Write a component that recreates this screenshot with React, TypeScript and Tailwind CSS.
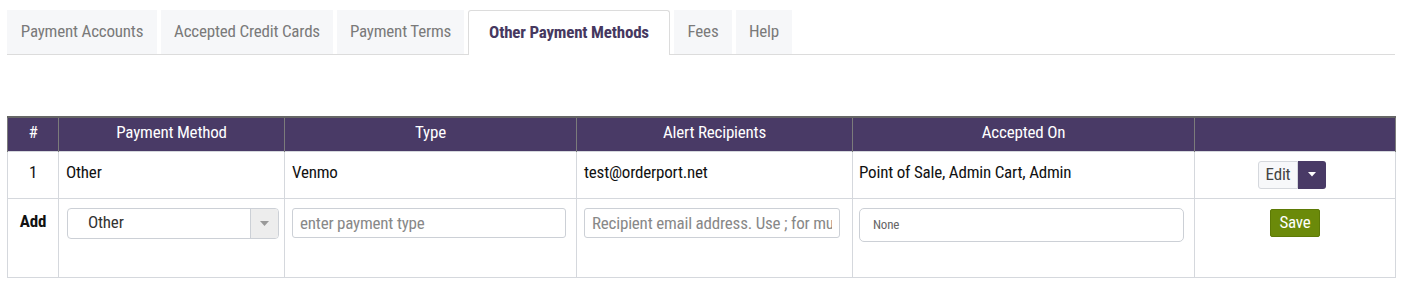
import React from 'react'

const tabs = [
  { label: 'Payment Accounts', w: 'w-[150px]' },
  { label: 'Accepted Credit Cards', w: 'w-[172px]' },
  { label: 'Payment Terms', w: 'w-[127px]' },
  { label: 'Other Payment Methods', w: 'w-[202px]', active: true },
  { label: 'Fees', w: 'w-[58px]' },
  { label: 'Help', w: 'w-[56px]' }
]

const Tabs = () => (
  <div className="flex h-[45px] gap-[4px] border-b border-[#dcdcdc]">
    {tabs.map((t) =>
      t.active ? (
        <div
          key={t.label}
          className={`${t.w} -mb-px flex items-center justify-center rounded-t-[3px] border border-b-0 border-[#dcdcdc] bg-white text-[17px] font-bold text-[#46385f]`}
        >
          {t.label}
        </div>
      ) : (
        <div
          key={t.label}
          className={`${t.w} flex items-center justify-center bg-[#f6f7f9] text-[17px] text-[#7a7a7a]`}
        >
          {t.label}
        </div>
      )
    )}
  </div>
)

const headers = ['#', 'Payment Method', 'Type', 'Alert Recipients', 'Accepted On', '']

const cell = 'border border-[#d5d8dd]'
const inputCls =
  'h-[30px] rounded-[3px] border border-[#ccd0d6] bg-white px-[7px] text-[17px] tracking-[-0.2px] text-[#333] outline-none placeholder:text-[#888]'

export default function App() {
  return (
    <div className="px-[7px] pt-[10px] font-['Roboto_Condensed',sans-serif] text-[17px] tracking-[-0.2px]">
      <Tabs />
      <table className="mt-[61px] w-[1388px] table-fixed border-collapse border border-[#d5d8dd]">
        <colgroup>
          <col className="w-[51px]" />
          <col className="w-[226px]" />
          <col className="w-[292px]" />
          <col className="w-[276px]" />
          <col className="w-[342px]" />
          <col className="w-[201px]" />
        </colgroup>
        <thead>
          <tr className="h-[34px] bg-[#493a66] text-white">
            {headers.map((h, i) => (
              <th
                key={i}
                className="border-x border-t-2 border-x-[#7b7b7b] border-t-[#666] pb-[3px] text-center text-[17px] font-normal"
              >
                {h}
              </th>
            ))}
          </tr>
        </thead>
        <tbody className="text-[#111]">
          <tr className="h-[47px]">
            <td className={`${cell} pb-[3px] text-center`}>1</td>
            <td className={`${cell} px-[7px] pb-[3px]`}>Other</td>
            <td className={`${cell} px-[7px] pb-[3px]`}>Venmo</td>
            <td className={`${cell} px-[7px] pb-[3px]`}>test@orderport.net</td>
            <td className={`${cell} px-[6px] pb-[3px]`}>Point of Sale, Admin Cart, Admin</td>
            <td className={`${cell} pr-[6px] text-center`}>
              <div className="inline-flex">
                <button className="flex h-[28px] items-center rounded-l-[3px] border border-[#d5d8dd] bg-[#f7f8fa] px-[7px] text-[17px] text-[#444]">
                  Edit
                </button>
                <button className="flex h-[28px] w-[28px] items-center justify-center rounded-r-[3px] bg-[#493a66]">
                  <svg width="8" height="5" viewBox="0 0 8 5">
                    <path d="M0 0h8L4 4.5z" fill="#fff" />
                  </svg>
                </button>
              </div>
            </td>
          </tr>
          <tr className="h-[79px] align-top">
            <td className={`${cell} pt-[10px] text-center font-bold`}>Add</td>
            <td className={`${cell} px-[8px] pt-[9px]`}>
              <div className="flex h-[31px] w-[212px] items-center overflow-hidden rounded-[4px] border border-[#ccd0d6]">
                <span className="flex-1 pl-[20px] text-[#333]">Other</span>
                <span className="flex h-full w-[28px] items-center justify-center border-l border-[#ccd0d6] bg-[#ededed]">
                  <svg width="9" height="5" viewBox="0 0 9 5">
                    <path d="M0 0h9L4.5 5z" fill="#999" />
                  </svg>
                </span>
              </div>
            </td>
            <td className={`${cell} px-[7px] pt-[9px]`}>
              <input className={`${inputCls} w-[274px]`} placeholder="enter payment type" />
            </td>
            <td className={`${cell} px-[7px] pt-[9px]`}>
              <input
                className={`${inputCls} w-[256px]`}
                placeholder="Recipient email address. Use ; for multiple"
              />
            </td>
            <td className={`${cell} px-[6px] pt-[9px]`}>
              <div className="flex h-[34px] w-[325px] items-center rounded-[5px] border border-[#ccd0d6] px-[13px] text-[13px] text-[#666]">
                None
              </div>
            </td>
            <td className={`${cell} pt-[10px] text-center`}>
              <button className="inline-flex h-[28px] items-center rounded-[2px] border border-[#5d7a06] bg-[#6b8a0a] px-[8px] text-[17px] text-white">
                Save
              </button>
            </td>
          </tr>
        </tbody>
      </table>
    </div>
  )
}
